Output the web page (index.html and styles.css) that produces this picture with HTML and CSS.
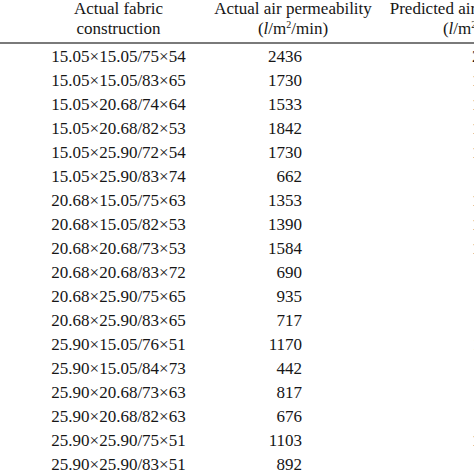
FILE: index.html
```html
<!DOCTYPE html>
<html>
<head>
<meta charset="utf-8">
<link rel="stylesheet" href="styles.css">
</head>
<body>
<div class="table">
  <div class="head">
    <div class="c1">Actual fabric<br>construction</div>
    <div class="c2">Actual air permeability<br>(<i>l</i>/m<sup>2</sup>/min)</div>
    <div class="c3">Predicted air permeability<br>(<i>l</i>/m<sup>2</sup>/min)</div>
  </div>
  <div class="body">
    <div class="row"><div class="c1">15.05×15.05/75×54</div><div class="c2 num">2436</div><div class="c3 num">2387</div></div>
    <div class="row"><div class="c1">15.05×15.05/83×65</div><div class="c2 num">1730</div><div class="c3 num">1692</div></div>
    <div class="row"><div class="c1">15.05×20.68/74×64</div><div class="c2 num">1533</div><div class="c3 num">1547</div></div>
    <div class="row"><div class="c1">15.05×20.68/82×53</div><div class="c2 num">1842</div><div class="c3 num">1801</div></div>
    <div class="row"><div class="c1">15.05×25.90/72×54</div><div class="c2 num">1730</div><div class="c3 num">1688</div></div>
    <div class="row"><div class="c1">15.05×25.90/83×74</div><div class="c2 num">662</div><div class="c3 num">705</div></div>
    <div class="row"><div class="c1">20.68×15.05/75×63</div><div class="c2 num">1353</div><div class="c3 num">1329</div></div>
    <div class="row"><div class="c1">20.68×15.05/82×53</div><div class="c2 num">1390</div><div class="c3 num">1412</div></div>
    <div class="row"><div class="c1">20.68×20.68/73×53</div><div class="c2 num">1584</div><div class="c3 num">1561</div></div>
    <div class="row"><div class="c1">20.68×20.68/83×72</div><div class="c2 num">690</div><div class="c3 num">712</div></div>
    <div class="row"><div class="c1">20.68×25.90/75×65</div><div class="c2 num">935</div><div class="c3 num">958</div></div>
    <div class="row"><div class="c1">20.68×25.90/83×65</div><div class="c2 num">717</div><div class="c3 num">741</div></div>
    <div class="row"><div class="c1">25.90×15.05/76×51</div><div class="c2 num">1170</div><div class="c3 num">1194</div></div>
    <div class="row"><div class="c1">25.90×15.05/84×73</div><div class="c2 num">442</div><div class="c3 num">463</div></div>
    <div class="row"><div class="c1">25.90×20.68/73×63</div><div class="c2 num">817</div><div class="c3 num">836</div></div>
    <div class="row"><div class="c1">25.90×20.68/82×63</div><div class="c2 num">676</div><div class="c3 num">655</div></div>
    <div class="row"><div class="c1">25.90×25.90/75×51</div><div class="c2 num">1103</div><div class="c3 num">1087</div></div>
    <div class="row"><div class="c1">25.90×25.90/83×51</div><div class="c2 num">892</div><div class="c3 num">874</div></div>
  </div>
</div>
</body>
</html>
```
FILE: styles.css
```css
html, body {
  margin: 0;
  padding: 0;
  background: #ffffff;
  overflow: hidden;
  width: 474px;
  height: 474px;
}
body {
  font-family: "Liberation Serif", "Times New Roman", serif;
  font-size: 17px;
  color: #161616;
}
.table {
  width: 600px;
}
.head, .row {
  display: grid;
  grid-template-columns: 213px 160px 195px;
}
.head {
  line-height: 20px;
  margin-top: -1px;
  padding-bottom: 3px;
  border-bottom: 2px solid #7a7a7a;
  text-align: center;
  white-space: nowrap;
}
.head sup {
  font-size: 10px;
  line-height: 0;
  vertical-align: 6px;
}
.body {
  padding-top: 1px;
}
.row {
  height: 24px;
  line-height: 24px;
  white-space: nowrap;
}
.c1 {
  padding-left: 24px;
  text-align: center;
}
.c3 {
  padding-left: 15px;
}
.num {
  text-align: right;
  padding-right: 71px;
}
.c3.num {
  padding-right: 62px;
}
```
